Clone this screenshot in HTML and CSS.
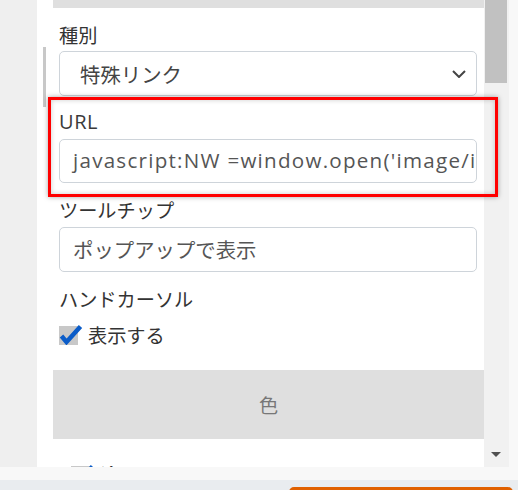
FILE: index.html
```html
<!DOCTYPE html>
<html lang="ja">
<head>
<meta charset="utf-8">
<link rel="stylesheet" href="styles.css">
</head>
<body>
<div class="app">
  <div class="main">
    <div class="gutter"></div>
    <div class="panel">
      <div class="side-strip"></div>
      <div class="topbar"></div>
      <div class="group first">
        <div class="label">種別</div>
        <div class="select">
          <span class="select-text">特殊リンク</span>
          <svg class="chev" width="14" height="8" viewBox="0 0 14 8"><path d="M1 1 L7 7 L13 1" fill="none" stroke="#444" stroke-width="2"/></svg>
        </div>
      </div>
      <div class="group">
        <div class="label latin">URL</div>
        <div class="input">javascript:NW =window.open('image/image.html','popup','width=600,height=400')</div>
      </div>
      <div class="group">
        <div class="label">ツールチップ</div>
        <div class="input tall">ポップアップで表示</div>
      </div>
      <div class="group">
        <div class="label">ハンドカーソル</div>
        <div class="check-row">
          <svg class="check" width="24" height="22" viewBox="0 0 24 22"><rect x="0" y="3" width="19" height="19" fill="#c8c8c8"/><path d="M2.5 13 L7.5 19 L21.5 3.5" fill="none" stroke="#0b5cc8" stroke-width="4.5" stroke-linejoin="miter"/></svg>
          <span class="check-text">表示する</span>
        </div>
      </div>
      <div class="color-btn">色</div>
      <div class="check-row sub">
        <svg class="check" width="24" height="22" viewBox="0 0 24 22"><rect x="0" y="3" width="19" height="19" fill="#c8c8c8"/><path d="M2.5 13 L7.5 19 L21.5 3.5" fill="none" stroke="#0b5cc8" stroke-width="4.5"/></svg>
        <span class="check-text">塗り</span>
      </div>
    </div>
    <div class="scrollbar">
      <div class="thumb"></div>
      <div class="arrow"></div>
    </div>
    <div class="edge"></div>
    <div class="highlight"></div>
  </div>
  <div class="footer-top"></div>
  <div class="footer">
    <div class="orange-btn"></div>
  </div>
</div>
</body>
</html>
```
FILE: styles.css
```css
html, body {
  margin: 0;
  padding: 0;
}
body {
  width: 518px;
  height: 490px;
  overflow: hidden;
  background: #efefef;
  font-family: "Open Sans", "Noto Sans CJK JP", sans-serif;
  color: #333;
}
.app {
  display: flex;
  flex-direction: column;
  height: 490px;
}
.main {
  position: relative;
  display: flex;
  height: 467px;
  flex: none;
}
.gutter {
  width: 37px;
  flex: none;
  background: #efefef;
}
.panel {
  position: relative;
  width: 431px;
  padding-left: 16px;
  flex: none;
  background: #fff;
  overflow: hidden;
}
.side-strip {
  position: absolute;
  left: 6px;
  top: 47px;
  width: 3px;
  height: 60px;
  background: #c8c8c8;
}
.topbar {
  height: 8px;
  background: #dfdfdf;
}
.group {
  margin: 0 7px 0 6px;
}
.label {
  font-family: "Noto Sans CJK JP", sans-serif;
  font-size: 19.2px;
  line-height: 28px;
  padding-top: 13px;
  margin-bottom: 3px;
  color: #333;
}
.label.latin {
  font-family: "Open Sans", "Noto Sans CJK JP", sans-serif;
  font-size: 20px;
  letter-spacing: 0.6px;
  color: #3a3a3a;
}
.first .label {
  padding-top: 13px;
  margin-bottom: 2px;
}
.group:nth-child(4) .label {
  padding-top: 12px;
}
.select {
  height: 45px;
  box-sizing: border-box;
  border: 1.5px solid #ced4da;
  border-radius: 5px;
  display: flex;
  align-items: center;
  padding: 0 10px 0 20px;
  font-family: "Noto Sans CJK JP", sans-serif;
  font-size: 20.4px;
  color: #444;
}
.select-text {
  flex: 1;
}
.chev {
  display: block;
}
.input {
  height: 44px;
  box-sizing: border-box;
  border: 1.5px solid #ced4da;
  border-radius: 5px;
  padding: 0 12px 0 13px;
  font-family: "Open Sans", "Noto Sans CJK JP", sans-serif;
  font-size: 20.6px;
  letter-spacing: 1.25px;
  line-height: 41px;
  color: #555;
  white-space: nowrap;
  overflow: hidden;
}
.input.tall {
  height: 45px;
  font-family: "Noto Sans CJK JP", sans-serif;
  font-size: 20.4px;
  letter-spacing: 0;
  line-height: 42px;
}
.check-row {
  display: flex;
  align-items: center;
  height: 28px;
  margin-top: 8px;
}
.check {
  display: block;
  margin-top: -3px;
  margin-right: 5px;
}
.check-text {
  font-family: "Noto Sans CJK JP", sans-serif;
  font-size: 19.2px;
  color: #333;
}
.color-btn {
  margin-top: 21px;
  height: 69px;
  background: #dfdfdf;
  color: #777;
  font-family: "Noto Sans CJK JP", sans-serif;
  font-size: 19.2px;
  display: flex;
  align-items: center;
  justify-content: center;
}
.check-row.sub {
  margin-top: 22px;
  margin-left: 18px;
}
.scrollbar {
  position: relative;
  width: 25px;
  flex: none;
  background: #f1f1f1;
}
.thumb {
  margin-left: 1px;
  width: 22px;
  height: 83px;
  background: #c1c1c1;
}
.arrow {
  position: absolute;
  left: 7px;
  top: 452px;
  width: 0;
  height: 0;
  border-left: 5.5px solid transparent;
  border-right: 5.5px solid transparent;
  border-top: 5px solid #505050;
}
.edge {
  flex: 1;
  background: #f8f8f8;
}
.highlight {
  position: absolute;
  left: 48px;
  top: 97px;
  width: 444px;
  height: 94px;
  border: 3px solid #ff0000;
  box-shadow: 0 0 5px rgba(0, 0, 0, 0.35), inset 0 0 5px rgba(0, 0, 0, 0.2);
}
.footer-top {
  height: 13px;
  flex: none;
  background: #f8f8f8;
}
.footer {
  flex: 1;
  background: #e9ecef;
  position: relative;
}
.orange-btn {
  position: absolute;
  left: 289px;
  top: 7px;
  width: 224px;
  height: 20px;
  background: #e06000;
  border-radius: 5px;
}
```
